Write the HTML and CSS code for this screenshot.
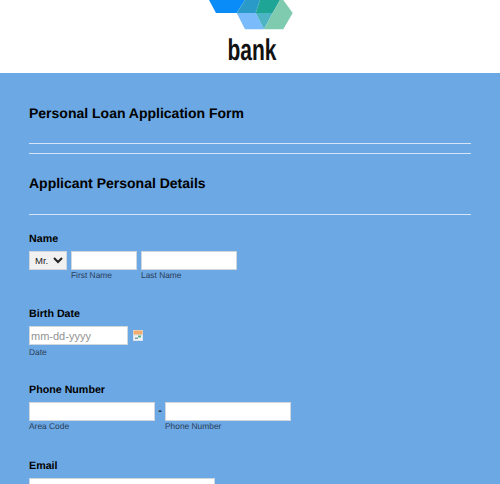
FILE: index.html
```html
<!DOCTYPE html>
<html lang="en">
<head>
<meta charset="utf-8">
<title>Personal Loan Application Form</title>
<link rel="stylesheet" href="styles.css">
</head>
<body>
<header class="brand">
  <svg class="logo" width="90" height="30" viewBox="0 0 90 30" aria-hidden="true">
    <polygon points="0,0 36,0 27.7,13 7,13" fill="#0a8cf8"/>
    <polygon points="27.7,13 46.7,13 55,29.3 36,29.3" fill="#79bbfb"/>
    <polygon points="36,0 51,0 46.7,13 27.7,13" fill="#2a9bc8"/>
    <polygon points="51,0 71,0 63.7,13 46.7,13" fill="#1fa596"/>
    <polygon points="46.7,13 63.7,13 55,29.3" fill="#4db4c4"/>
    <polygon points="71,0 74.3,0 83.7,13 74.3,29.3 55,29.3 63.7,13" fill="#7fcbb0"/>
  </svg>
  <div class="wordmark">bank</div>
</header>
<main class="form">
  <h1 class="title">Personal Loan Application Form</h1>
  <hr class="rule rule-first">
  <hr class="rule rule-second">
  <h2 class="section">Applicant Personal Details</h2>
  <hr class="rule rule-third">

  <section class="field field-name">
    <label class="label">Name</label>
    <div class="row">
      <div class="col"><select class="select"><option>Mr.</option></select></div>
      <div class="col"><input class="input w-first" type="text"><span class="sub">First Name</span></div>
      <div class="col"><input class="input w-last" type="text"><span class="sub">Last Name</span></div>
    </div>
  </section>

  <section class="field field-birth">
    <label class="label">Birth Date</label>
    <div class="row date-row">
      <div class="col"><input class="input w-date" type="text" placeholder="mm-dd-yyyy"><span class="sub sub-date">Date</span></div>
      <svg class="cal" width="10" height="11" viewBox="0 0 10 11" aria-hidden="true">
        <rect width="10" height="11" fill="#d9e4ee"/>
        <rect x="0.5" y="0.5" width="9" height="4" fill="#f4ac6c"/>
        <rect x="1" y="5.5" width="8" height="4.5" fill="#eef3f6"/>
        <rect x="5" y="5.5" width="3" height="2" fill="#58b08a"/>
        <rect x="2" y="7.5" width="3" height="1.5" fill="#8a9aa8"/>
      </svg>
    </div>
  </section>

  <section class="field field-phone">
    <label class="label">Phone Number</label>
    <div class="row phone-row">
      <div class="col"><input class="input w-phone" type="text"><span class="sub">Area Code</span></div>
      <span class="dash">-</span>
      <div class="col"><input class="input w-phone" type="text"><span class="sub">Phone Number</span></div>
    </div>
  </section>

  <section class="field field-email">
    <label class="label">Email</label>
    <input class="input w-email" type="text">
  </section>
</main>
</body>
</html>
```
FILE: styles.css
```css
html, body { margin: 0; padding: 0; height: 484px; overflow: hidden; }
body { background: #6ca8e3; font-family: "Liberation Sans", Arial, sans-serif; color: #000; text-rendering: geometricPrecision; }

.brand { background: #fff; height: 73px; display: flex; flex-direction: column; align-items: center; overflow: hidden; }
.logo { display: block; margin-left: 8px; flex: none; }
.wordmark { font-size: 30px; line-height: 33px; margin-top: 4px; color: #111; transform: scaleX(0.7); font-weight: 700; margin-left: 5px; }

.form { padding: 0 29px; }
.title { margin: 0; padding-top: 32px; font-size: 14px; line-height: 17px; font-weight: 700; }
.section { margin: 0; padding-top: 21px; font-size: 14px; line-height: 17px; font-weight: 700; }

.rule { border: 0; height: 1px; background: #d5e5f7; margin: 0; }
.rule-first { margin-top: 21px; }
.rule-second { margin-top: 9px; }
.rule-third { margin-top: 22px; }

.label { display: block; font-size: 10.7px; line-height: 13px; font-weight: 700; }
.field-name { padding-top: 18px; }
.field-birth { padding-top: 27px; }
.field-phone { padding-top: 26px; }
.field-email { padding-top: 28px; }

.row { display: flex; gap: 4px; margin-top: 5px; }
.col { display: flex; flex-direction: column; }

.input { box-sizing: border-box; height: 19px; margin: 0; padding: 0 1px; background: #fff; border: 1px solid #cfd6de; border-radius: 0; font-family: inherit; font-size: 11px; }
.input::placeholder { color: #929292; opacity: 1; }
.w-first { width: 66px; }
.w-last { width: 96px; }
.w-date { width: 99px; }
.w-phone { width: 126px; }
.w-email { width: 186px; margin-top: 5px; display: block; }

.select { box-sizing: border-box; width: 38px; height: 19px; margin: 0; padding: 0 0 0 1px; background: #f1f1f1; border: 1px solid #cfd6de; border-radius: 0; font-family: inherit; font-size: 9.5px; color: #222; }
.sub { font-size: 8.4px; line-height: 11px; color: #2a3d58; }
.sub-date { margin-top: 2px; }

.date-row { gap: 5px; }
.cal { margin-top: 4px; }
.phone-row { gap: 0; }
.dash { width: 10px; text-align: center; font-size: 11px; font-weight: 700; line-height: 19px; color: #222; }
```
